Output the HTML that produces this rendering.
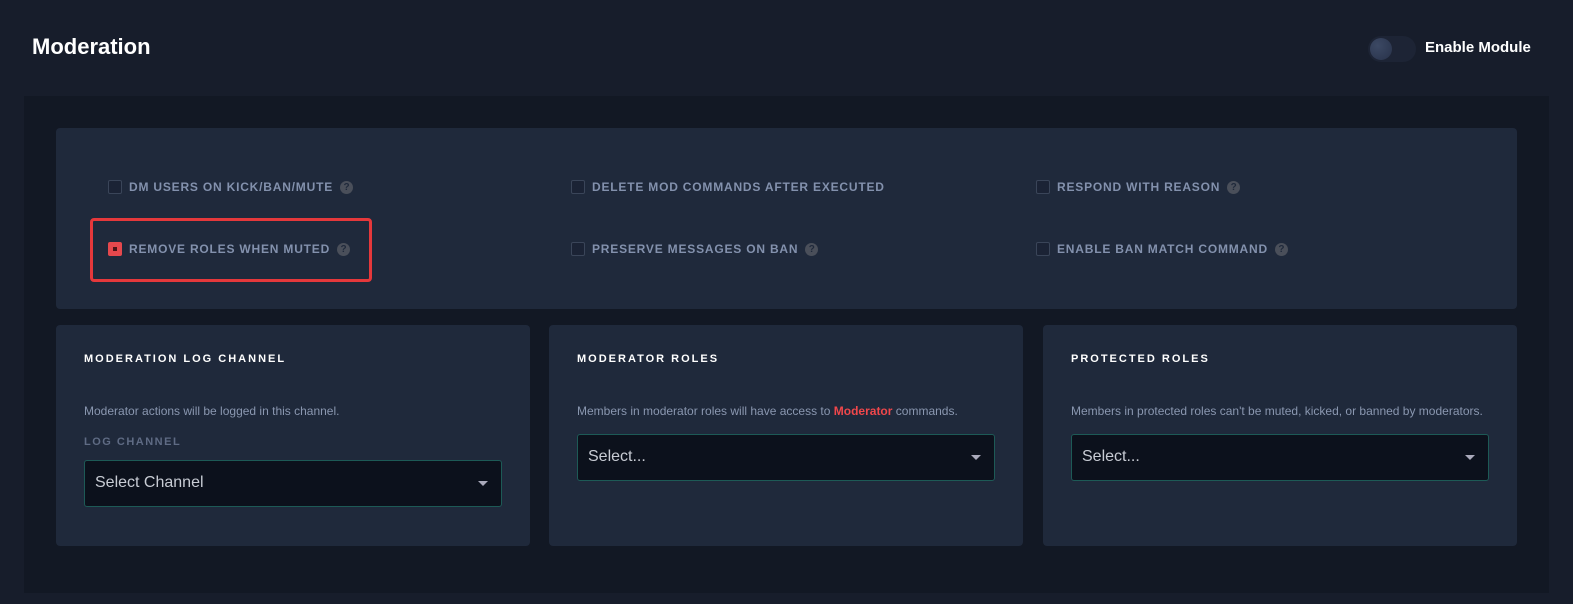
<!DOCTYPE html>
<html><head><style>
*{box-sizing:border-box;margin:0;padding:0}
body{width:1573px;height:604px;background:#171d2b;font-family:"Liberation Sans",sans-serif;position:relative;overflow:hidden}
.abs{position:absolute}
h1{position:absolute;left:32px;top:34px;font-size:22px;color:#fff;font-weight:bold}
.tog{left:1368px;top:36px;width:48px;height:26px;border-radius:13px;background:#1d2435}
.tog i{position:absolute;left:2px;top:2px;width:22px;height:22px;border-radius:50%;background:radial-gradient(circle at 35% 35%,#3c4964,#28324a)}
.en{left:1425px;top:39px;color:#fff;font-weight:bold;font-size:15px}
.outer{left:24px;top:96px;width:1525px;height:497px;background:#121824}
.card{background:#1f293b;border-radius:4px}
.cb{position:absolute;display:flex;align-items:center;font-size:12px;font-weight:bold;letter-spacing:0.8px;color:#8391ad;white-space:nowrap}
.cb b{width:14px;height:14px;border:1px solid #3a4559;border-radius:2px;background:#1b2335;margin-right:7px;display:inline-block}
.q{display:inline-block;width:13px;height:13px;border-radius:50%;background:#4a4f5a;color:#1f293b;font-size:10px;text-align:center;line-height:13px;margin-left:7px;letter-spacing:0}
.t{position:absolute;left:28px;top:28px;color:#fff;font-size:11px;font-weight:bold;letter-spacing:2px}
.d{position:absolute;left:28px;top:79px;color:#8a97b0;font-size:12px}
.sel{position:absolute;left:28px;width:418px;height:47px;background:#0c111c;border:1px solid #1d5a56;border-radius:3px;color:#c8ccd4;font-size:16px;padding:13px 10px}
.sel:after{content:"";position:absolute;right:13px;top:20px;border:5px solid transparent;border-top:5px solid #aab;border-bottom:0}
</style></head><body>
<h1>Moderation</h1>
<div class="abs tog"><i></i></div>
<div class="abs en">Enable Module</div>
<div class="abs outer"></div>
<div class="abs card" style="left:56px;top:128px;width:1461px;height:181px"></div>
<div class="cb" style="left:108px;top:180px"><b></b>DM USERS ON KICK/BAN/MUTE<span class="q">?</span></div>
<div class="cb" style="left:571px;top:180px"><b></b>DELETE MOD COMMANDS AFTER EXECUTED</div>
<div class="cb" style="left:1036px;top:180px"><b></b>RESPOND WITH REASON<span class="q">?</span></div>
<div class="cb" style="left:108px;top:242px"><b style="background:#e5484d;border-color:#e5484d;position:relative"><s style="position:absolute;left:4px;top:4px;width:4px;height:4px;background:#4a1418"></s></b>REMOVE ROLES WHEN MUTED<span class="q">?</span></div>
<div class="cb" style="left:571px;top:242px"><b></b>PRESERVE MESSAGES ON BAN<span class="q">?</span></div>
<div class="cb" style="left:1036px;top:242px"><b></b>ENABLE BAN MATCH COMMAND<span class="q">?</span></div>
<div class="abs" style="left:90px;top:218px;width:282px;height:64px;border:3px solid #e5383b;border-radius:4px"></div>

<div class="abs card" style="left:56px;top:325px;width:474px;height:221px">
<div class="t">MODERATION LOG CHANNEL</div>
<div class="d">Moderator actions will be logged in this channel.</div>
<div style="position:absolute;left:28px;top:111px;color:#5f6b84;font-size:11px;font-weight:bold;letter-spacing:1.5px">LOG CHANNEL</div>
<div class="sel" style="top:135px">Select Channel</div>
</div>
<div class="abs card" style="left:549px;top:325px;width:474px;height:221px">
<div class="t">MODERATOR ROLES</div>
<div class="d">Members in moderator roles will have access to <span style="color:#f0474b;font-weight:bold">Moderator</span> commands.</div>
<div class="sel" style="top:109px">Select...</div>
</div>
<div class="abs card" style="left:1043px;top:325px;width:474px;height:221px">
<div class="t">PROTECTED ROLES</div>
<div class="d">Members in protected roles can't be muted, kicked, or banned by moderators.</div>
<div class="sel" style="top:109px">Select...</div>
</div>
</body></html>
